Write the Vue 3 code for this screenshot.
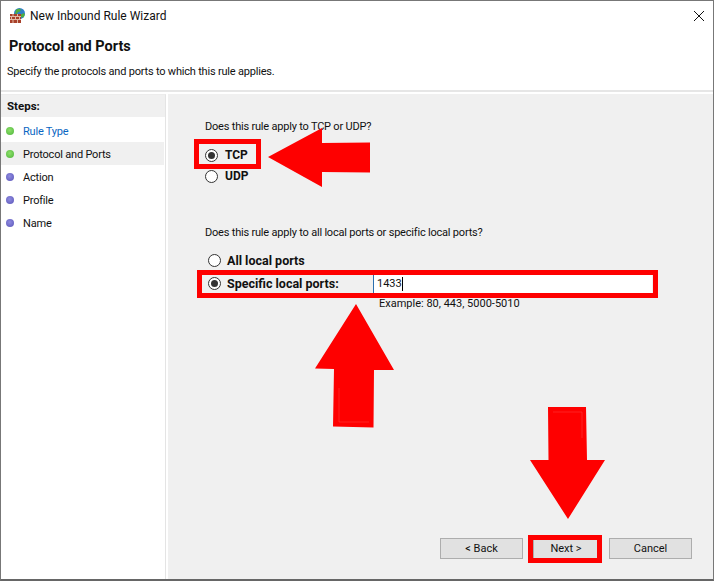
<script setup>
const steps = [
  { label: 'Rule Type', done: true, link: true },
  { label: 'Protocol and Ports', done: true, active: true },
  { label: 'Action' },
  { label: 'Profile' },
  { label: 'Name' },
]
</script>

<template>
  <div class="window">
    <div class="titlebar">
      <svg class="app-icon" width="16" height="16" viewBox="0 0 16 16">
        <circle cx="9.500" cy="5.500" r="5.500" fill="#2f7fc8" />
        <path d="M6 2c2-1.500 4-1.500 5-.5l-1 2-2 .5-1 2-2-.5zM11 6.500l3-1.500.8 1.500-1.300 3-2.500-.5z" fill="#4fae3c" />
        <rect x="0" y="6" width="11" height="9" fill="#a8402a" />
        <path d="M0 8.500h11M0 11.500h11M3 6v2.500M7.500 6v2.500M1.500 8.500v3M5.500 8.500v3M9.500 8.500v3M3 11.500V15M7.500 11.500V15" stroke="#e0b8a4" stroke-width="1" fill="none" />
      </svg>
      <span class="title">New Inbound Rule Wizard</span>
      <svg class="close" width="10" height="10" viewBox="0 0 10 10">
        <path d="M0 0l10 10M10 0L0 10" stroke="#111" stroke-width="1" fill="none" />
      </svg>
    </div>

    <div class="header">
      <div class="heading">Protocol and Ports</div>
      <div class="subheading">Specify the protocols and ports to which this rule applies.</div>
    </div>

    <div class="body">
      <aside class="sidebar">
        <div class="steps-title">Steps:</div>
        <div class="step-list">
          <div
            v-for="step in steps"
            :key="step.label"
            class="step"
            :class="{ active: step.active, link: step.link }"
          >
            <span class="dot" :class="step.done ? 'green' : 'blue'"></span>
            <span class="step-label">{{ step.label }}</span>
          </div>
        </div>
      </aside>

      <main class="content">
        <div class="question q1">Does this rule apply to TCP or UDP?</div>
        <div class="radio-group protocol">
          <label class="radio-row"><span class="radio checked"></span><b>TCP</b></label>
          <label class="radio-row"><span class="radio"></span><b>UDP</b></label>
        </div>

        <div class="question q2">Does this rule apply to all local ports or specific local ports?</div>
        <div class="radio-group ports">
          <label class="radio-row wide"><span class="radio"></span><b>All local ports</b></label>
          <div class="port-row">
            <label class="radio-row wide port-label"><span class="radio checked"></span><b>Specific local ports:</b></label>
            <div class="port-input">1433<span class="caret"></span></div>
          </div>
          <div class="example">Example: 80, 443, 5000-5010</div>
        </div>

        <div class="buttons">
          <button class="btn">&lt; Back</button>
          <button class="btn next">Next &gt;</button>
          <button class="btn">Cancel</button>
        </div>
      </main>
    </div>

    <span class="mark mark-tcp"></span>
    <span class="mark mark-port"></span>
    <span class="mark mark-next"></span>

    <svg class="arrows" width="714" height="581" viewBox="0 0 714 581">
      <path d="M268 157L322 128V143L370 142.500V172.500L322 172V187Z" fill="#fe0000" />
      <path d="M356 304L315 368.500L334 369L333 426.500L373.500 427.500L374 370L394 370Z" fill="#fe0000" />
      <path d="M548 407H586L587 460H605L568 519L530 460H548.500Z" fill="#fe0000" />
      <g fill="none" stroke="#ff5a5a" stroke-width="0.6" opacity="0.6">
        <path d="M339 388V422H369" />
        <path d="M553 412H582V438" />
      </g>
    </svg>
  </div>
</template>

<style>
html, body { margin: 0; padding: 0; background: #fff; }
</style>

<style scoped>
.window {
  position: relative;
  width: 714px;
  height: 581px;
  box-sizing: border-box;
  border: 1px solid #777;
  border-bottom: 2px solid #666;
  background: #fff;
  display: flex;
  flex-direction: column;
  overflow: hidden;
  font-family: Roboto, "Open Sans", sans-serif;
  font-size: 11px;
  letter-spacing: -0.2px;
  color: #111;
}
.titlebar {
  height: 29px;
  flex: none;
  display: flex;
  align-items: center;
  padding-left: 9px;
  padding-right: 9px;
}
.title { margin-left: 4px; flex: 1; font-size: 12px; letter-spacing: 0; }
.header {
  height: 62px;
  flex: none;
  box-sizing: border-box;
  border-bottom: 2px solid #e6e6e6;
  padding-left: 6px;
}
.heading {
  font-size: 14.500px;
  font-weight: 700;
  letter-spacing: 0;
  line-height: 18px;
  margin-top: 8px;
  margin-left: 2px;
}
.subheading { line-height: 16px; margin-top: 8px; }
.body { flex: 1; display: flex; padding-top: 2px; min-height: 0; }
.sidebar {
  width: 165px;
  flex: none;
  box-sizing: border-box;
  border-top: 1px solid #ececec;
  border-right: 1px solid #e4e4e4;
  margin-right: 2px;
}
.steps-title {
  height: 22px;
  line-height: 22px;
  background: #f0f0f0;
  font-weight: 700;
  font-size: 11.500px;
  letter-spacing: 0;
  padding-left: 6px;
}
.step-list { padding-top: 2px; }
.step {
  height: 23px;
  display: flex;
  align-items: center;
  gap: 9px;
  padding-left: 5px;
  margin-right: 1px;
}
.step-label { padding-top: 1px; }
.step.active { background: #f0f0f0; }
.step.link { color: #0a66c2; }
.dot { width: 8px; height: 8px; border-radius: 50%; flex: none; margin-top: 1px; }
.dot.green { background: radial-gradient(circle at 45% 40%, #8ee06a, #4cb33a); }
.dot.blue { background: radial-gradient(circle at 45% 40%, #8f8be0, #5a55b8); }
.content {
  flex: 1;
  position: relative;
  background: #f0f0f0;
  padding-left: 37px;
  display: flex;
  flex-direction: column;
  min-width: 0;
}
.question { line-height: 16px; }
.q1 { margin-top: 25px; }
.q2 { margin-top: 42px; }
.radio-group { display: flex; flex-direction: column; }
.protocol { margin-top: 13px; gap: 7px; }
.ports { margin-top: 12px; margin-left: 3px; }
.radio-row {
  display: flex;
  align-items: center;
  gap: 7px;
  height: 14px;
  font-size: 12px;
  letter-spacing: 0;
}
.radio-row.wide { font-size: 12.500px; gap: 6px; }
.radio-row b { font-weight: 700; }
.radio {
  width: 13px;
  height: 13px;
  box-sizing: border-box;
  border: 1px solid #333;
  border-radius: 50%;
  background: #fff;
  flex: none;
  display: flex;
  align-items: center;
  justify-content: center;
}
.radio.checked::after {
  content: "";
  width: 7px;
  height: 7px;
  border-radius: 50%;
  background: #333;
}
.port-row { display: flex; align-items: center; margin-top: 7px; height: 20px; }
.port-label { width: 165px; flex: none; margin-bottom: 2px; }
.port-input {
  width: 279px;
  height: 20px;
  box-sizing: border-box;
  background: #fff;
  border-left: 1px solid #2a6fb0;
  padding-left: 3px;
  line-height: 20px;
  letter-spacing: 0;
  display: flex;
  align-items: center;
}
.caret { width: 1px; height: 14px; background: #000; }
.example { margin-left: 171px; line-height: 16px; margin-top: 2px; letter-spacing: 0; }
.buttons {
  margin-top: auto;
  margin-bottom: 20px;
  margin-left: 235px;
  display: flex;
  gap: 10px;
}
.btn {
  height: 21px;
  width: 83px;
  box-sizing: border-box;
  border: 1px solid #adadad;
  background: #e1e1e1;
  font: inherit;
  letter-spacing: 0;
  color: #111;
  padding: 0;
}
.btn.next { width: 66px; border-bottom: 1px solid #2a7ad0; }
.mark {
  position: absolute;
  box-sizing: border-box;
  border: 5px solid #fe0000;
}
.mark-tcp { left: 193px; top: 138px; width: 67px; height: 30px; }
.mark-port { left: 196px; top: 269px; width: 461px; height: 28px; }
.mark-next { left: 527px; top: 534px; width: 74px; height: 28px; }
.arrows { position: absolute; left: -1px; top: -1px; pointer-events: none; }
</style>
